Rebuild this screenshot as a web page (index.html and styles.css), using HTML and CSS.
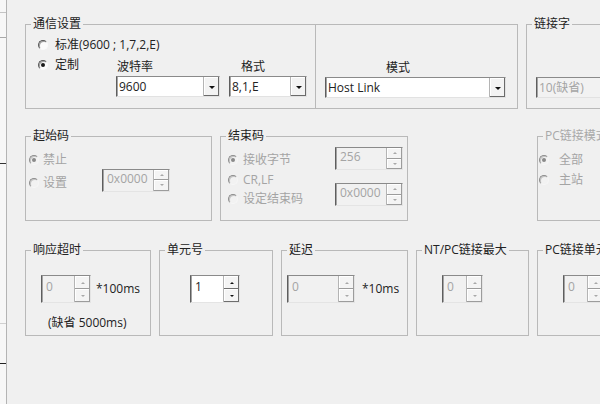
FILE: index.html
```html
<!DOCTYPE html>
<html>
  <head>
    <meta charset="utf-8">
    <title>通信设置</title>
    <link rel="stylesheet" href="styles.css">
  </head>
  <body>
    <div class="side">
      <div class="side__line side__line--a"></div>
      <div class="side__line side__line--b"></div>
      <div class="side__line side__line--c"></div>
      <div class="side__line side__line--d"></div>
      <div class="side__line side__line--e"></div>
    </div>

    <div class="dlg">
      <!-- первый ряд: параметры порта -->
      <div class="row">
        <fieldset class="grp grp--comm">
          <legend class="grp__title">通信设置</legend>
          <div class="opt opt--std"><span class="radio"></span>标准(9600 ; 1,7,2,E)</div>
          <div class="comm-row">
            <div class="opt opt--custom"><span class="radio radio--on"></span>定制</div>
            <div class="field field--baud">
              <div class="field__cap">波特率</div>
              <div class="combo">
                <span class="combo__val">9600</span>
                <span class="combo__btn"></span>
              </div>
            </div>
            <div class="field field--fmt">
              <div class="field__cap">格式</div>
              <div class="combo">
                <span class="combo__val">8,1,E</span>
                <span class="combo__btn"></span>
              </div>
            </div>
          </div>
        </fieldset>

        <div class="modebox">
          <div class="field__cap modebox__cap">模式</div>
          <div class="combo modebox__combo">
            <span class="combo__val">Host Link</span>
            <span class="combo__btn"></span>
          </div>
        </div>

        <fieldset class="grp grp--link">
          <legend class="grp__title">链接字</legend>
          <div class="combo combo--off link-combo">
            <span class="combo__val">10(缺省)</span>
            <span class="combo__btn"></span>
          </div>
        </fieldset>
      </div>

      <!-- второй ряд: стартовый и конечный коды -->
      <div class="row row--2">
        <fieldset class="grp grp--start">
          <legend class="grp__title">起始码</legend>
          <div class="opt opt--off opt--start"><span class="radio radio--on"></span>禁止</div>
          <div class="start-row">
            <div class="opt opt--off opt--start opt--set"><span class="radio"></span>设置</div>
            <div class="spin spin--off spin--hex">
              <span class="spin__val">0x0000</span>
              <span class="spin__btns"><span class="spin__up"></span><span class="spin__down"></span></span>
            </div>
          </div>
        </fieldset>

        <fieldset class="grp grp--end">
          <legend class="grp__title">结束码</legend>
          <div class="end-body">
            <div class="end-opts">
              <div class="opt opt--off opt--end"><span class="radio radio--on"></span>接收字节</div>
              <div class="opt opt--off opt--end"><span class="radio"></span>CR,LF</div>
              <div class="opt opt--off opt--end opt--last"><span class="radio"></span>设定结束码</div>
            </div>
            <div class="end-spins">
              <div class="spin spin--off spin--hex">
                <span class="spin__val">256</span>
                <span class="spin__btns"><span class="spin__up"></span><span class="spin__down"></span></span>
              </div>
              <div class="spin spin--off spin--hex spin--second">
                <span class="spin__val">0x0000</span>
                <span class="spin__btns"><span class="spin__up"></span><span class="spin__down"></span></span>
              </div>
            </div>
          </div>
        </fieldset>

        <fieldset class="grp grp--off grp--pcmode">
          <legend class="grp__title">PC链接模式</legend>
          <div class="opt opt--off opt--pc"><span class="radio radio--on"></span>全部</div>
          <div class="opt opt--off opt--pc"><span class="radio"></span>主站</div>
        </fieldset>
      </div>

      <!-- третий ряд: таймауты и номера -->
      <div class="row row--3">
        <fieldset class="grp grp--tall grp--timeout">
          <legend class="grp__title">响应超时</legend>
          <div class="unit-row">
            <div class="spin spin--off spin--tall spin--timeout">
              <span class="spin__val">0</span>
              <span class="spin__btns"><span class="spin__up"></span><span class="spin__down"></span></span>
            </div>
            <span class="unit">*100ms</span>
          </div>
          <div class="note">(缺省 5000ms)</div>
        </fieldset>

        <fieldset class="grp grp--tall grp--unitno">
          <legend class="grp__title">单元号</legend>
          <div class="spin spin--tall spin--unitno">
            <span class="spin__val">1</span>
            <span class="spin__btns"><span class="spin__up"></span><span class="spin__down"></span></span>
          </div>
        </fieldset>

        <fieldset class="grp grp--tall grp--delay">
          <legend class="grp__title">延迟</legend>
          <div class="unit-row">
            <div class="spin spin--off spin--tall spin--delay">
              <span class="spin__val">0</span>
              <span class="spin__btns"><span class="spin__up"></span><span class="spin__down"></span></span>
            </div>
            <span class="unit unit--delay">*10ms</span>
          </div>
        </fieldset>

        <fieldset class="grp grp--tall grp--ntpc">
          <legend class="grp__title">NT/PC链接最大</legend>
          <div class="spin spin--off spin--tall spin--small">
            <span class="spin__val">0</span>
            <span class="spin__btns"><span class="spin__up"></span><span class="spin__down"></span></span>
          </div>
        </fieldset>

        <fieldset class="grp grp--tall grp--pcunit">
          <legend class="grp__title">PC链接单元</legend>
          <div class="spin spin--off spin--tall spin--small">
            <span class="spin__val">0</span>
            <span class="spin__btns"><span class="spin__up"></span><span class="spin__down"></span></span>
          </div>
        </fieldset>
      </div>
    </div>
  </body>
</html>
```

FILE: styles.css
```css
html {
  margin: 0;
  padding: 0;
}

body {
  display: flex;
  width: 600px;
  height: 404px;
  margin: 0;
  overflow: hidden;
  background: #f0f0f0;
  font-family: "Open Sans", "Noto Sans CJK SC", sans-serif;
  font-size: 12px;
  line-height: 16px;
  color: #222;
}

/* полоска слева от окна */
.side {
  flex: none;
  display: flex;
  flex-direction: column;
  width: 6px;
  background: #f7f7f7;
  border-right: 1px solid #b4b4b4;
}

.side__line {
  height: 1px;
  background: #c4c4c4;
}

.side__line--a { margin-top: 12px; }
.side__line--b { margin-top: 24px; background: #a8a8a8; }
.side__line--c { margin-top: 125px; background: #333; }
.side__line--d { margin-top: 159px; background: #d0d0d0; }
.side__line--e { margin-top: 39px; background: #222; }

.dlg {
  flex: none;
  width: 700px;
  padding: 16px 0 0 18px;
}

.row {
  display: flex;
  align-items: flex-start;
}

.row--2 { margin-top: 19px; }
.row--3 { margin-top: 21px; }

/* групбоксы */
.grp {
  flex: none;
  box-sizing: border-box;
  min-width: 0;
  height: 93px;
  margin: 0;
  padding: 0;
  border: 1px solid #b9b9b9;
}

.grp--tall { height: 94px; }

.grp__title {
  margin-left: 5px;
  padding: 0 2px;
  line-height: 16px;
}

.grp--off .grp__title { color: #a8a8a8; }

.grp--comm { width: 291px; }
.grp--link { width: 100px; margin-left: 8px; }
.grp--start { width: 187px; }
.grp--end { width: 188px; margin-left: 8px; }
.grp--pcmode { width: 100px; margin-left: 129px; }
.grp--timeout { width: 126px; }
.grp--unitno { width: 114px; margin-left: 8px; }
.grp--delay { width: 127px; margin-left: 8px; }
.grp--ntpc { width: 113px; margin-left: 8px; }
.grp--pcunit { width: 100px; margin-left: 8px; }

.modebox {
  flex: none;
  box-sizing: border-box;
  width: 203px;
  height: 85px;
  margin: 8px 0 0 -1px;
  border: 1px solid #b9b9b9;
}

/* радиокнопки */
.opt {
  display: flex;
  align-items: center;
  height: 20px;
  white-space: nowrap;
}

.opt--off { color: #a4a4a4; }

.radio {
  position: relative;
  flex: none;
  box-sizing: border-box;
  width: 10px;
  height: 10px;
  border: 1px solid;
  border-color: #555 #fafafa #fafafa #555;
  border-radius: 50%;
  background: #fbfbfb;
  box-shadow: inset 1px 1px #a0a0a0;
}

.opt--off .radio {
  border-color: #8c8c8c #f6f6f6 #f6f6f6 #8c8c8c;
  background: #f2f2f2;
  box-shadow: inset 1px 1px #c4c4c4;
}

.radio--on::after {
  content: '';
  position: absolute;
  left: 2px;
  top: 2px;
  width: 4px;
  height: 4px;
  border-radius: 50%;
  background: #1a1a1a;
}

.opt--off .radio--on::after { background: #8a8a8a; }

.opt--std { margin-top: 3px; }
.opt--std .radio,
.opt--custom .radio { margin: 0 7px 0 12px; }
.opt--custom { width: 90px; }

.opt--start .radio { margin: 0 4px 0 3px; }
.opt--start:first-of-type { margin-top: 6px; }
.opt--set { width: 76px; }

.opt--end .radio { margin: 0 5px 0 7px; }
.opt--last { height: 18px; }

.opt--pc .radio { margin: 0 10px 0 1px; }
.opt--pc:first-of-type { margin-top: 6px; }

/* выпадающие списки */
.comm-row {
  display: flex;
  align-items: flex-start;
}

.field--baud { width: 104px; }
.field--fmt { width: 78px; margin-left: 9px; }

.field__cap {
  margin-top: 4px;
  padding-left: 1px;
  line-height: 16px;
}

.field--fmt .field__cap { padding-left: 12px; }

.modebox__cap {
  margin-top: 35px;
  padding-left: 70px;
}

.combo {
  display: flex;
  box-sizing: border-box;
  height: 21px;
  margin-top: 1px;
  background: #fff;
  border: 1px solid;
  border-color: #8a8a8a #e2e2e2 #e2e2e2 #5e5e5e;
  box-shadow: inset 1px 0 #a4a4a4;
}

.combo__val {
  flex: 1;
  padding-left: 2px;
  line-height: 19px;
  white-space: nowrap;
  overflow: hidden;
}

.combo__btn {
  flex: none;
  display: flex;
  align-items: center;
  justify-content: center;
  width: 15px;
  background: #f3f3f3;
  border-left: 1px solid #b4b4b4;
  box-shadow: inset -1px -1px #6a6a6a, inset 1px 1px #fff;
}

.combo__btn::before {
  content: '';
  border-left: 3px solid transparent;
  border-right: 3px solid transparent;
  border-top: 3px solid #111;
  margin-top: 1px;
}

.combo--off {
  background: #f2f2f2;
  color: #a4a4a4;
}

.modebox__combo {
  width: 181px;
  margin-left: 9px;
}

.link-combo {
  width: 120px;
  margin: 45px 0 0 9px;
}

/* счетчики */
.spin {
  flex: none;
  display: flex;
  box-sizing: border-box;
  height: 23px;
  background: #fff;
  border: 1px solid;
  border-color: #8a8a8a #e4e4e4 #e4e4e4 #5e5e5e;
  box-shadow: inset 1px 0 #a4a4a4;
}

.spin--off {
  background: #f1f1f1;
  color: #a4a4a4;
}

.spin__val {
  flex: 1;
  padding: 1px 0 0 4px;
  line-height: 16px;
  white-space: nowrap;
}

.spin__btns {
  flex: none;
  display: flex;
  flex-direction: column;
  width: 15px;
  border-left: 1px solid #b4b4b4;
}

.spin__up,
.spin__down {
  flex: 1;
  display: flex;
  align-items: center;
  justify-content: center;
  background: #f4f4f4;
  box-shadow: inset -1px -1px #6e6e6e, inset 1px 1px #fff;
}

.spin--off .spin__up,
.spin--off .spin__down {
  box-shadow: inset -1px -1px #9c9c9c, inset 1px 1px #fff;
}

.spin__up::before,
.spin__down::before {
  content: '';
  border-left: 2px solid transparent;
  border-right: 2px solid transparent;
}

.spin__up::before { border-bottom: 2px solid #111; }
.spin__down::before { border-top: 2px solid #111; }
.spin--off .spin__up::before { border-bottom-color: #a8a8a8; }
.spin--off .spin__down::before { border-top-color: #a8a8a8; }

.spin--hex { width: 68px; }

.start-row {
  display: flex;
  align-items: center;
  margin-top: -3px;
}

.end-body { display: flex; }
.end-opts { width: 114px; padding-top: 6px; }
.end-spins { padding-top: 3px; }
.spin--second { margin-top: 13px; }

.spin--tall {
  height: 28px;
  margin-top: 17px;
}

.spin--tall .spin__val { padding-top: 3px; }

.unit-row {
  display: flex;
  align-items: center;
}

.unit-row .spin--tall { margin-top: 17px; }

.unit {
  margin: 17px 0 0 5px;
}

.unit--delay { margin-left: 7px; }

.spin--timeout { width: 50px; margin-left: 15px; }
.spin--unitno { width: 50px; margin-left: 30px; }
.spin--delay { width: 68px; margin-left: 5px; }
.spin--small { width: 41px; margin-left: 25px; }

.note {
  margin: 12px 0 0 22px;
  line-height: 16px;
}
```
